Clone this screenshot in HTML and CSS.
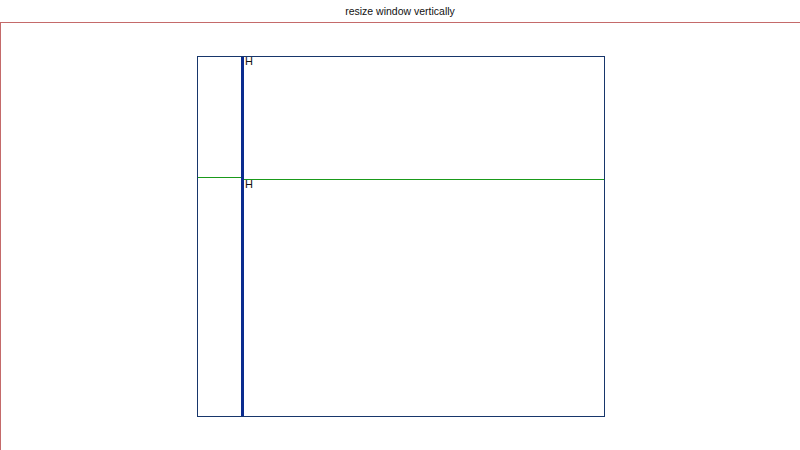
FILE: index.html
```
<!DOCTYPE html>
<html>
<head>
<meta charset="utf-8">
<link rel="stylesheet" href="styles.css">
</head>
<body>
<div class="title">resize window vertically</div>
<div class="frame">
  <div class="box">
    <div class="side">
      <div class="side-top"></div>
      <div class="side-bottom"></div>
    </div>
    <div class="main">
      <div class="main-top">H</div>
      <div class="main-bottom">H</div>
    </div>
  </div>
</div>
</body>
</html>
```
FILE: styles.css
```
html, body {
  margin: 0;
  padding: 0;
  background: #fff;
  overflow: hidden;
}
body {
  font-family: "Liberation Sans", Arial, sans-serif;
  color: #111;
}
.title {
  height: 22px;
  line-height: 22px;
  text-align: center;
  font-size: 10.5px;
}
.frame {
  border-top: 1px solid #c46a6a;
  border-left: 1px solid #c46a6a;
  height: 428px;
  padding-top: 33px;
  padding-left: 196px;
  box-sizing: border-box;
}
.box {
  width: 408px;
  height: 361px;
  box-sizing: border-box;
  border: 1px solid #17366b;
  display: flex;
}
.side {
  width: 43px;
  border-right: 3px solid #0b2c8f;
  display: flex;
  flex-direction: column;
}
.side-top {
  height: 120px;
  border-bottom: 1px solid #1a9a1a;
}
.main {
  flex: 1;
  display: flex;
  flex-direction: column;
}
.main-top {
  height: 122px;
  border-bottom: 1px solid #1a9a1a;
  font-size: 11px;
  line-height: 9px;
  padding-left: 1px;
}
.main-bottom {
  flex: 1;
  font-size: 11px;
  line-height: 9px;
  padding-left: 1px;
}
```
